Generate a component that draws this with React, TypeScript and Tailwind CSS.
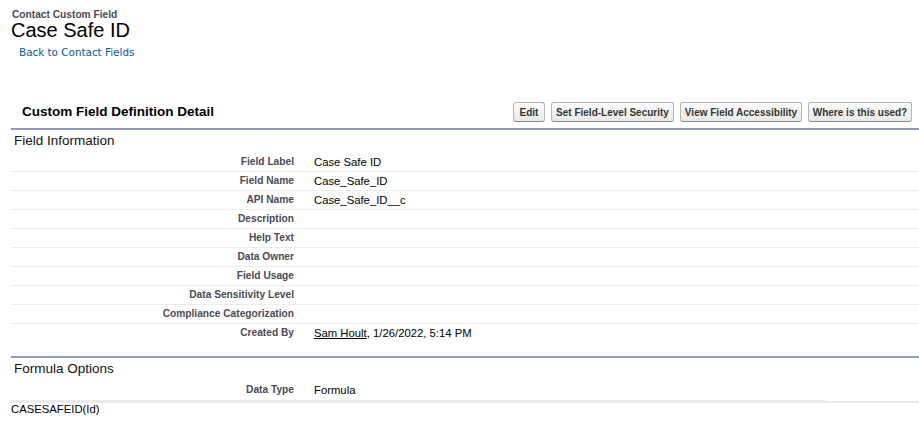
import React from "react";

const rows: { label: string; value?: React.ReactNode }[] = [
  { label: "Field Label", value: "Case Safe ID" },
  { label: "Field Name", value: "Case_Safe_ID" },
  { label: "API Name", value: "Case_Safe_ID__c" },
  { label: "Description" },
  { label: "Help Text" },
  { label: "Data Owner" },
  { label: "Field Usage" },
  { label: "Data Sensitivity Level" },
  { label: "Compliance Categorization" },
  {
    label: "Created By",
    value: (
      <>
        <span className="underline">Sam Hoult</span>, 1/26/2022, 5:14 PM
      </>
    ),
  },
];

function Btn({ label, w }: { label: string; w: string }) {
  return (
    <div
      className={`${w} h-[20px] flex items-center justify-center whitespace-nowrap rounded-[3px] border border-[#b5b5b5] border-b-[#8a8a8a] bg-linear-to-b from-[#fcfcfc] to-[#e9e9e9] text-[10px] font-bold text-[#333]`}
    >
      {label}
    </div>
  );
}

function Row({ label, value, last }: { label: string; value?: React.ReactNode; last?: boolean }) {
  return (
    <div className={`flex h-[19px] items-center border-b ${last ? "border-transparent" : "border-[#ececec]"}`}>
      <div className="w-[293px] shrink-0 pr-[10px] text-right text-[10.2px] font-bold text-[#4a4a56]">{label}</div>
      <div className="pl-[10px] text-[11.3px] text-black">{value}</div>
    </div>
  );
}

export default function App() {
  return (
    <div className="w-[919px] h-[432px] overflow-hidden bg-white font-['Liberation_Sans',Arial,sans-serif] text-black">
      <div className="pl-[11px] pt-[9px]">
        <div className="pl-[1px] text-[10.2px] leading-[12px] font-bold text-[#4a4a56]">Contact Custom Field</div>
        <h1 className="-mt-[1px] text-[20px] leading-[20px] font-normal text-black">Case Safe ID</h1>
        <div className="mt-[6px] pl-[8px] font-['DejaVu_Sans',Verdana,sans-serif] text-[10.4px] leading-[12px] text-[#015ba7]">
          Back to Contact Fields
        </div>
      </div>

      <div className="ml-[11px] mt-[44px] flex items-center justify-between border-b-2 border-[#8e9dbe] pb-[6px] pl-[11px] pr-[7px]">
        <h2 className="text-[13.5px] leading-[16px] font-bold text-black">Custom Field Definition Detail</h2>
        <div className="flex gap-[6px]">
          <Btn label="Edit" w="w-[32px]" />
          <Btn label="Set Field-Level Security" w="w-[123px]" />
          <Btn label="View Field Accessibility" w="w-[122px]" />
          <Btn label="Where is this used?" w="w-[104px]" />
        </div>
      </div>

      <div className="ml-[11px]">
        <div className="flex h-[23px] items-center pl-[3px] text-[13.5px] text-[#111]">Field Information</div>
        {rows.map((r, i) => (
          <Row key={r.label} label={r.label} value={r.value} last={i === rows.length - 1} />
        ))}

        <div className="mt-[13px] border-t-2 border-[#8e9dbe]" />
        <div className="flex h-[23px] items-center pl-[3px] text-[13.5px] text-[#111]">Formula Options</div>
        <Row label="Data Type" value="Formula" last />
        <div className="flex">
          <div className="h-[3px] w-[815px] bg-[#ebebeb]" />
          <div className="mt-[1px] h-[2px] flex-1 bg-[#ebebeb]" />
        </div>
        <div className="text-[11.3px] leading-[13px] text-black">CASESAFEID(Id)</div>
      </div>
    </div>
  );
}
